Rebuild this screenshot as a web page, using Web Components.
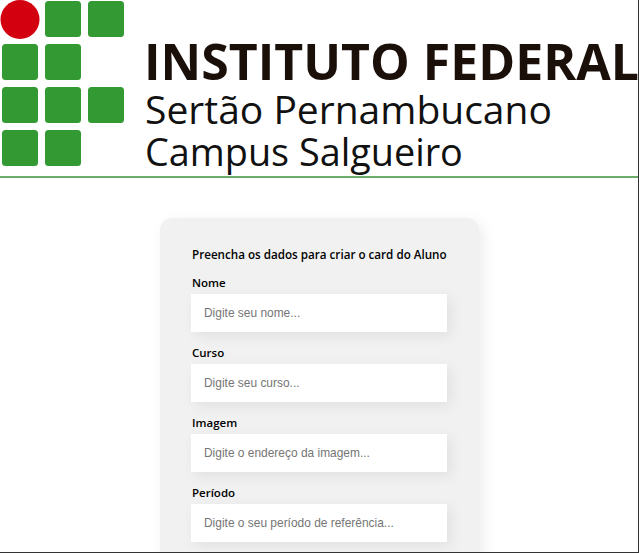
<!DOCTYPE html>
<html lang="pt-BR"><head><meta charset="utf-8"><title>Card do Aluno</title>
<style>
html,body{margin:0;padding:0;height:553px;overflow:hidden;background:#fff}
body{font-family:"Open Sans","Liberation Sans",sans-serif}
</style></head><body>
<if-page>
<if-header></if-header>
<if-form-card heading="Preencha os dados para criar o card do Aluno">
<if-field label="Nome" placeholder="Digite seu nome..."></if-field>
<if-field label="Curso" placeholder="Digite seu curso..."></if-field>
<if-field label="Imagem" placeholder="Digite o endereço da imagem..."></if-field>
<if-field label="Período" placeholder="Digite o seu período de referência..."></if-field>
</if-form-card>
</if-page>
<script>
class Base extends HTMLElement{
  render(html){ (this.shadowRoot||this.attachShadow({mode:'open'})).innerHTML=html; }
}
customElements.define('if-page',class extends Base{connectedCallback(){this.render(`<style>
:host{display:block;box-sizing:border-box;width:639px;height:553px;overflow:hidden;border-right:1px solid #333;border-bottom:1px solid #333}
</style><slot></slot>`)}});
customElements.define('if-header',class extends Base{connectedCallback(){
const sq=[[45,1],[88,1],[2,44],[45,44],[2,87],[45,87],[88,87],[2,130],[45,130]].map(([x,y])=>`<rect x="${x}" y="${y}" width="36" height="36" rx="3.5"/>`).join('');
this.render(`<style>
:host{display:flex;box-sizing:border-box;height:178px;border-bottom:2px solid #6aad6a;gap:18px;overflow:hidden}
svg{flex:none;width:126px;height:176px;display:block;filter:blur(.4px)}
.t{display:flex;flex-direction:column;padding-top:36px;white-space:nowrap}
.b{font:700 50px/50px "Open Sans",sans-serif;color:#1b0f0a}
.r{font:400 39px/42px "Open Sans",sans-serif;color:#111;margin-left:1px}
.r.s{margin-top:2px}
.r.c{font-size:37.8px;margin-top:1px}
</style>
<svg viewBox="0 0 126 176" aria-hidden="true"><circle cx="20" cy="19.5" r="19.5" fill="#d3000f"/><g fill="#339933">${sq}</g></svg>
<div class="t"><span class="b">INSTITUTO FEDERAL</span><span class="r s">Sertão Pernambucano</span><span class="r c">Campus Salgueiro</span></div>`)}});
customElements.define('if-form-card',class extends Base{connectedCallback(){
this.render(`<style>
:host{display:block;box-sizing:border-box;width:319px;margin:40px 0 0 160px;padding:28px 32px 40px 31px;background:#f1f1f1;border-radius:12px;box-shadow:4px 4px 14px rgba(0,0,0,.08)}
h2{margin:0 0 10px 1px;font:600 11.65px/18px "Open Sans",sans-serif;color:#000;white-space:nowrap}
.f{display:flex;flex-direction:column;gap:12px}
</style><h2></h2><div class="f"><slot></slot></div>`);
this.shadowRoot.querySelector('h2').textContent=this.getAttribute('heading');}});
customElements.define('if-field',class extends Base{connectedCallback(){
this.render(`<style>
:host{display:flex;flex-direction:column}
label{font:600 11.5px/18px "Open Sans",sans-serif;color:#000;margin:0 0 2px 1px}
input{box-sizing:border-box;width:256px;height:38px;border:0;outline:0;background:#fff;padding:0 13px;font:11.95px "Liberation Sans",Arial,sans-serif;box-shadow:4px 4px 14px rgba(0,0,0,.07);border-radius:0}
input::placeholder{color:#757575;opacity:1}
</style><label for="i"></label><input id="i" type="text">`);
this.shadowRoot.querySelector('label').textContent=this.getAttribute('label');
this.shadowRoot.querySelector('input').placeholder=this.getAttribute('placeholder');}});
</script>
</body></html>
